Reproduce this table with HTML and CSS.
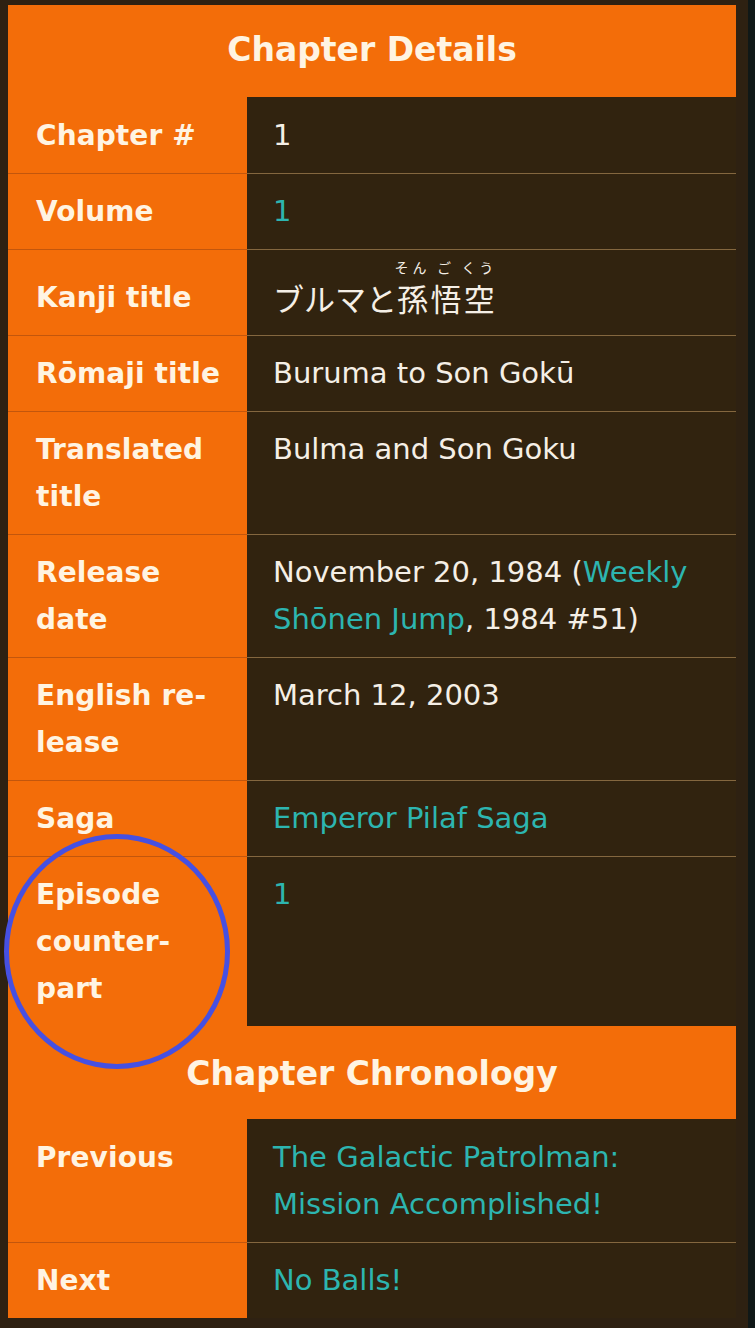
FILE: index.html
```html
<!DOCTYPE html>
<html lang="en">
<head>
<meta charset="utf-8">
<link rel="stylesheet" href="styles.css">
</head>
<body>
<div class="page">
  <div class="infobox">
    <div class="head">Chapter Details</div>
    <div class="row first">
      <div class="label">Chapter #</div>
      <div class="value">1</div>
    </div>
    <div class="row">
      <div class="label">Volume</div>
      <div class="value"><a class="link">1</a></div>
    </div>
    <div class="row kanji">
      <div class="label">Kanji title</div>
      <div class="value jp">ブルマと<ruby>孫<rt>そん</rt>悟<rt>ご</rt>空<rt>くう</rt></ruby></div>
    </div>
    <div class="row">
      <div class="label">Rōmaji title</div>
      <div class="value">Buruma to Son Gokū</div>
    </div>
    <div class="row">
      <div class="label">Translated<br>title</div>
      <div class="value">Bulma and Son Goku</div>
    </div>
    <div class="row">
      <div class="label">Release<br>date</div>
      <div class="value">November 20, 1984 (<a class="link">Weekly<br>Shōnen Jump</a>, 1984 #51)</div>
    </div>
    <div class="row">
      <div class="label">English re-<br>lease</div>
      <div class="value">March 12, 2003</div>
    </div>
    <div class="row">
      <div class="label">Saga</div>
      <div class="value"><a class="link">Emperor Pilaf Saga</a></div>
    </div>
    <div class="row">
      <div class="label">Episode<br>counter-<br>part</div>
      <div class="value"><a class="link">1</a></div>
    </div>
    <div class="head head2">Chapter Chronology</div>
    <div class="row first">
      <div class="label">Previous</div>
      <div class="value"><a class="link">The Galactic Patrolman:<br>Mission Accomplished!</a></div>
    </div>
    <div class="row">
      <div class="label">Next</div>
      <div class="value"><a class="link">No Balls!</a></div>
    </div>
    <div class="circle"></div>
  </div>
  <div class="edge"></div>
</div>
</body>
</html>
```
FILE: styles.css
```css
html, body {
  margin: 0;
  padding: 0;
  background: #2e2112;
}
body {
  width: 755px;
  height: 1328px;
  overflow: hidden;
  font-family: "DejaVu Sans", "Open Sans", sans-serif;
}
.page {
  display: flex;
  height: 1328px;
}
.infobox {
  position: relative;
  margin: 5px 0 0 8px;
  width: 728px;
  display: flex;
  flex-direction: column;
  align-self: flex-start;
}
.edge {
  margin-left: auto;
  width: 7px;
  background: #101817;
}
.head {
  background: #f36d09;
  color: #fff4e2;
  font-weight: 700;
  font-size: 33px;
  text-align: center;
  height: 92px;
  line-height: 90px;
}
.head2 {
  height: 93px;
  line-height: 95px;
}
.row {
  display: grid;
  grid-template-columns: 239px 1fr;
}
.label, .value {
  border-top: 1px solid #a85416;
  padding: 14px 0 14px 28px;
  line-height: 47px;
}
.label {
  background: #f36d09;
  color: #fff4e2;
  font-weight: 700;
  font-size: 28px;
  letter-spacing: 0.1px;
  border-top-color: #c2560c;
}
.value {
  background: #31230f;
  color: #f5efe6;
  font-size: 29px;
  padding-left: 26px;
  border-top-color: #84673f;
}
.row.first .label, .row.first .value {
  border-top-color: transparent;
}
.link {
  color: #2db5b0;
}
.row.kanji .label, .row.kanji .value {
  padding-top: 24px;
}
.jp {
  font-family: "Noto Sans CJK JP", sans-serif;
  font-size: 31px;
  letter-spacing: 0;
  line-height: 47px;
}
.jp rt {
  font-size: 14px;
  line-height: 1;
  letter-spacing: 4px;
  padding-bottom: 6px;
}
.circle {
  position: absolute;
  left: -4px;
  top: 829px;
  width: 216px;
  height: 225px;
  border: 5px solid #4650e2;
  border-radius: 50%;
}
```
